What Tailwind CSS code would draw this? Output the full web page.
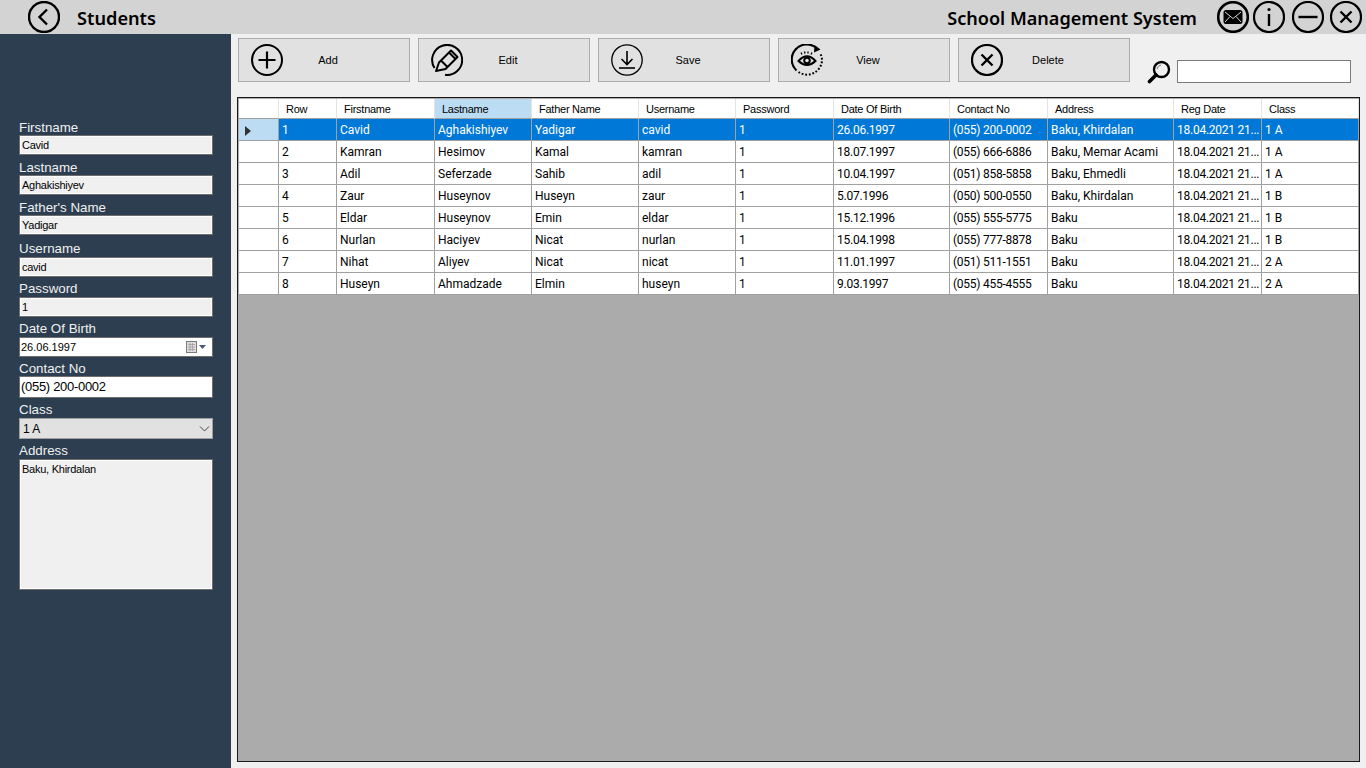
<!DOCTYPE html>
<html>
<head>
<meta charset="UTF-8">
<title>Students</title>
<script src="https://cdn.jsdelivr.net/npm/@tailwindcss/browser@4"></script>
</head>
<body class="w-[1366px] h-[768px] overflow-hidden bg-[#f0f0f0] font-['Liberation_Sans',sans-serif]">

<!-- Title bar -->
<div class="h-[34px] bg-[#d3d3d3] flex items-center pl-[28px] pr-[4px] text-black">
  <svg class="w-[32px] h-[32px]" viewBox="0 0 32 32" fill="none" stroke="black" stroke-width="2.4"><circle cx="16" cy="16" r="15"/><path d="M19 8.5 L11.5 16 L19 23.5" stroke-width="2.4"/></svg>
  <div class="ml-[17px] pt-[3px] text-[18.2px] font-semibold font-['Noto_Sans',sans-serif]">Students</div>
  <div class="ml-auto pt-[3px] text-[18.1px] font-semibold font-['Noto_Sans',sans-serif]">School Management System</div>
  <div class="ml-[20px] flex">
    <svg class="w-[32px] h-[32px]" viewBox="0 0 32 32" fill="none" stroke="black" stroke-width="2.6"><circle cx="16" cy="16" r="14.8"/><rect x="6.5" y="9" width="19" height="14" rx="2.5" fill="black" stroke="none"/><path d="M8 11 L16 17.5 L24 11 M8 21 L13 15.5 M24 21 L19 15.5" stroke="#d3d3d3" stroke-width="1"/></svg>
    <svg class="ml-[4px] w-[32px] h-[32px]" viewBox="0 0 32 32" fill="none" stroke="black" stroke-width="2.2"><circle cx="16" cy="16" r="15"/><path d="M16 13 V25" stroke-width="2.4"/><circle cx="16" cy="8.5" r="1.6" fill="black" stroke="none"/></svg>
    <svg class="ml-[7px] w-[32px] h-[32px]" viewBox="0 0 32 32" fill="none" stroke="black" stroke-width="2.2"><circle cx="16" cy="16" r="15"/><path d="M6.5 16 H25.5" stroke-width="2.4"/></svg>
    <svg class="ml-[6px] w-[32px] h-[32px]" viewBox="0 0 32 32" fill="none" stroke="black" stroke-width="2.2"><circle cx="16" cy="16" r="15"/><path d="M10.5 10.5 L21.5 21.5 M21.5 10.5 L10.5 21.5" stroke-width="2.4"/></svg>
  </div>
</div>

<div class="flex h-[734px]">
  <!-- Left panel -->
  <div class="w-[231px] bg-[#2c3e50] pl-[19px] pt-[86px] text-[13.33px] text-[#f0f0f0] leading-[15px]">
    <div>Firstname</div>
    <div class="w-[194px] h-[20px] bg-[#f0f0f0] border border-[#6e6e6e] shadow-[inset_0_0_0_1px_white] text-[11px] tracking-[-0.25px] text-black pl-[2px] leading-[18px]">Cavid</div>
    <div class="mt-[5px]">Lastname</div>
    <div class="w-[194px] h-[20px] bg-[#f0f0f0] border border-[#6e6e6e] shadow-[inset_0_0_0_1px_white] text-[11px] tracking-[-0.25px] text-black pl-[2px] leading-[18px]">Aghakishiyev</div>
    <div class="mt-[5px]">Father's Name</div>
    <div class="w-[194px] h-[20px] bg-[#f0f0f0] border border-[#6e6e6e] shadow-[inset_0_0_0_1px_white] text-[11px] tracking-[-0.25px] text-black pl-[2px] leading-[18px]">Yadigar</div>
    <div class="mt-[6px]">Username</div>
    <div class="mt-[1px] w-[194px] h-[20px] bg-[#f0f0f0] border border-[#6e6e6e] shadow-[inset_0_0_0_1px_white] text-[11px] tracking-[-0.25px] text-black pl-[2px] leading-[18px]">cavid</div>
    <div class="mt-[4px]">Password</div>
    <div class="mt-[1px] w-[194px] h-[20px] bg-[#f0f0f0] border border-[#6e6e6e] shadow-[inset_0_0_0_1px_white] text-[11px] tracking-[-0.25px] text-black pl-[2px] leading-[18px]">1</div>
    <div class="mt-[4px]">Date Of Birth</div>
    <div class="mt-[1px] w-[194px] h-[20px] bg-white border border-[#6e6e6e] text-[11px] text-black pl-[1px] leading-[18px] flex items-center">
      <span>26.06.1997</span>
      <svg class="ml-auto mr-[5px] w-[21px] h-[12px]" viewBox="0 0 21 12"><rect x="0.5" y="0.5" width="10" height="11" fill="#dcdcdc" stroke="#7a7a7a"/><path d="M2 3.5 H9 M2 6 H9 M2 8.5 H9 M4 2 V10 M6.5 2 V10" stroke="#a0a0a0" stroke-width="0.8"/><path d="M13 4 H20 L16.5 8 Z" fill="#4a5a78"/></svg>
    </div>
    <div class="mt-[4px]">Contact No</div>
    <div class="w-[194px] h-[22px] bg-white border border-[#6e6e6e] text-[13px] tracking-[-0.3px] text-black pl-[1px] leading-[20px]">(055) 200-0002</div>
    <div class="mt-[4px]">Class</div>
    <div class="mt-[1px] w-[194px] h-[21px] bg-[#e1e1e1] border border-[#a0a0a0] text-[12px] text-black pl-[3px] pt-[1px] leading-[19px] flex items-center">
      <span>1 A</span>
      <svg class="ml-auto mr-[2px] w-[11px] h-[6px]" viewBox="0 0 11 6" fill="none" stroke="#444" stroke-width="1"><path d="M1 0.5 L5.5 5 L10 0.5"/></svg>
    </div>
    <div class="mt-[4px]">Address</div>
    <div class="mt-[1px] w-[194px] h-[131px] bg-[#f0f0f0] border border-[#6e6e6e] shadow-[inset_0_0_0_1px_white] text-[11px] tracking-[-0.25px] text-black pl-[2px] pt-[1px] leading-[16px]">Baku, Khirdalan</div>
  </div>

  <!-- Right side -->
  <div class="flex-1 pl-[6px]">
    <div class="flex items-start pt-[4px] pl-[1px] text-[11px] text-black">
      <div class="w-[172px] h-[44px] bg-[#e1e1e1] border border-[#adadad] flex items-center pl-[12px]">
        <svg class="w-[32px] h-[32px]" viewBox="0 0 32 32" fill="none" stroke="black" stroke-width="2"><circle cx="16" cy="16" r="15"/><path d="M16 7.5 V24.5 M7.5 16 H24.5" stroke-width="2.2"/></svg>
        <span class="w-[90px] text-center">Add</span>
      </div>
      <div class="ml-[8px] w-[172px] h-[44px] bg-[#e1e1e1] border border-[#adadad] flex items-center pl-[12px]">
        <svg class="w-[32px] h-[32px]" viewBox="0 0 32 32" fill="none" stroke="black" stroke-width="2"><path d="M3.5 24 A15 15 0 1 1 14 30.8"/><path d="M5 27 L8 18.5 L20 6.5 L26.5 13 L14.5 25 Z M10 16.5 L16.5 23 M18 8.5 L24.5 15" stroke-width="2" stroke-linejoin="round"/></svg>
        <span class="w-[90px] text-center">Edit</span>
      </div>
      <div class="ml-[8px] w-[172px] h-[44px] bg-[#e1e1e1] border border-[#adadad] flex items-center pl-[12px]">
        <svg class="w-[32px] h-[32px]" viewBox="0 0 32 32" fill="none" stroke="black" stroke-width="1.3"><circle cx="16" cy="16" r="15.2"/><path d="M16 7 V20.5 M10.5 15 L16 20.5 L21.5 15" stroke-width="1.6"/><path d="M8 24 H24" stroke-width="1.6"/></svg>
        <span class="w-[90px] text-center">Save</span>
      </div>
      <div class="ml-[8px] w-[172px] h-[44px] bg-[#e1e1e1] border border-[#adadad] flex items-center pl-[12px]">
        <svg class="w-[32px] h-[32px]" viewBox="0 0 32 32" fill="none" stroke="black" stroke-width="2"><path d="M26 4.5 A15 15 0 0 0 5.5 26.5" stroke-width="2.2"/><path d="M7.5 28 A15 15 0 0 0 31 16 A15 15 0 0 0 29 9" stroke-dasharray="1.8 1.8" stroke-width="2"/><path d="M23.5 1 L29.5 5.5 L23 8.5 Z" fill="black" stroke="none"/><path d="M7.5 17 Q16 7.5 24.5 17 Q16 25 7.5 17 Z" stroke-width="2"/><circle cx="16" cy="16.5" r="2.8" stroke-width="2"/><path d="M11 10.5 L10 8.5 M14 9.5 L13.5 7.5 M17 9.5 V7.5 M20 10.5 L21 8.5" stroke-width="1.3"/></svg>
        <span class="w-[90px] text-center">View</span>
      </div>
      <div class="ml-[8px] w-[172px] h-[44px] bg-[#e1e1e1] border border-[#adadad] flex items-center pl-[12px]">
        <svg class="w-[32px] h-[32px]" viewBox="0 0 32 32" fill="none" stroke="black" stroke-width="2.2"><circle cx="16" cy="16" r="15"/><path d="M10.5 10.5 L21.5 21.5 M21.5 10.5 L10.5 21.5" stroke-width="2.4"/></svg>
        <span class="w-[90px] text-center">Delete</span>
      </div>
      <svg class="ml-[17px] mt-[22px] w-[24px] h-[24px]" viewBox="0 0 24 24" fill="none" stroke="black"><circle cx="14.5" cy="9.5" r="7.5" stroke-width="2.4"/><path d="M2.5 21.5 L9 15" stroke-width="3.6" stroke-linecap="round"/><path d="M10 9 A5 5 0 0 1 14 5" stroke-width="1" stroke="#777"/></svg>
      <div class="ml-[6px] mt-[22px] w-[174px] h-[23px] bg-white border border-[#7a7a7a]"></div>
    </div>

    <!-- Grid -->
    <div class="mt-[13px] w-[1123px] h-[665px] bg-[#ababab] border border-[#1a1a1a] pt-[1px] pl-[1px] font-['Roboto',sans-serif]">
      <table class="table-fixed border-separate border-spacing-0 text-[12px] leading-[19px] text-black w-[1120px]">
        <colgroup>
          <col class="w-[40px]"><col class="w-[58px]"><col class="w-[98px]"><col class="w-[97px]"><col class="w-[107px]"><col class="w-[97px]"><col class="w-[98px]"><col class="w-[116px]"><col class="w-[98px]"><col class="w-[126px]"><col class="w-[88px]"><col class="w-[97px]">
        </colgroup>
        <thead class="bg-white font-['Liberation_Sans',sans-serif] text-[11px] tracking-[-0.25px]">
          <tr class="h-[20px] *:font-normal *:text-left *:pl-[7px] *:pt-[1px] *:border-r *:border-b *:border-r-[#e4e4e4] *:border-b-[#a0a0a0] *:leading-[18px] *:overflow-hidden">
            <th class="border-r-[#a0a0a0]"></th><th>Row</th><th>Firstname</th><th class="bg-[#bcdcf4]">Lastname</th><th>Father Name</th><th>Username</th><th>Password</th><th>Date Of Birth</th><th>Contact No</th><th>Address</th><th>Reg Date</th><th>Class</th>
          </tr>
        </thead>
        <tbody>
          <tr class="h-[22px] bg-[#0078d7] text-white *:pl-[3px] *:pt-[2px] *:border-r *:border-b *:border-[#a0a0a0] *:whitespace-nowrap *:overflow-hidden">
            <td class="bg-[#bcdcf4] border-b-[#e4e4e4]"><svg class="ml-[3px] w-[6px] h-[10px]" viewBox="0 0 6 10"><path d="M0 0 L6 5 L0 10 Z" fill="#333"/></svg></td><td>1</td><td>Cavid</td><td>Aghakishiyev</td><td>Yadigar</td><td>cavid</td><td>1</td><td class="tracking-[-0.25px]">26.06.1997</td><td class="tracking-[-0.25px]">(055) 200-0002</td><td>Baku, Khirdalan</td><td class="tracking-[-0.25px]">18.04.2021 21...</td><td>1 A</td>
          </tr>
          <tr class="h-[22px] bg-white *:pl-[3px] *:pt-[2px] *:border-r *:border-b *:border-[#a0a0a0] *:whitespace-nowrap *:overflow-hidden">
            <td class="border-b-[#e4e4e4]"></td><td>2</td><td>Kamran</td><td>Hesimov</td><td>Kamal</td><td>kamran</td><td>1</td><td class="tracking-[-0.25px]">18.07.1997</td><td class="tracking-[-0.25px]">(055) 666-6886</td><td>Baku, Memar Acami</td><td class="tracking-[-0.25px]">18.04.2021 21...</td><td>1 A</td>
          </tr>
          <tr class="h-[22px] bg-white *:pl-[3px] *:pt-[2px] *:border-r *:border-b *:border-[#a0a0a0] *:whitespace-nowrap *:overflow-hidden">
            <td class="border-b-[#e4e4e4]"></td><td>3</td><td>Adil</td><td>Seferzade</td><td>Sahib</td><td>adil</td><td>1</td><td class="tracking-[-0.25px]">10.04.1997</td><td class="tracking-[-0.25px]">(051) 858-5858</td><td>Baku, Ehmedli</td><td class="tracking-[-0.25px]">18.04.2021 21...</td><td>1 A</td>
          </tr>
          <tr class="h-[22px] bg-white *:pl-[3px] *:pt-[2px] *:border-r *:border-b *:border-[#a0a0a0] *:whitespace-nowrap *:overflow-hidden">
            <td class="border-b-[#e4e4e4]"></td><td>4</td><td>Zaur</td><td>Huseynov</td><td>Huseyn</td><td>zaur</td><td>1</td><td class="tracking-[-0.25px]">5.07.1996</td><td class="tracking-[-0.25px]">(050) 500-0550</td><td>Baku, Khirdalan</td><td class="tracking-[-0.25px]">18.04.2021 21...</td><td>1 B</td>
          </tr>
          <tr class="h-[22px] bg-white *:pl-[3px] *:pt-[2px] *:border-r *:border-b *:border-[#a0a0a0] *:whitespace-nowrap *:overflow-hidden">
            <td class="border-b-[#e4e4e4]"></td><td>5</td><td>Eldar</td><td>Huseynov</td><td>Emin</td><td>eldar</td><td>1</td><td class="tracking-[-0.25px]">15.12.1996</td><td class="tracking-[-0.25px]">(055) 555-5775</td><td>Baku</td><td class="tracking-[-0.25px]">18.04.2021 21...</td><td>1 B</td>
          </tr>
          <tr class="h-[22px] bg-white *:pl-[3px] *:pt-[2px] *:border-r *:border-b *:border-[#a0a0a0] *:whitespace-nowrap *:overflow-hidden">
            <td class="border-b-[#e4e4e4]"></td><td>6</td><td>Nurlan</td><td>Haciyev</td><td>Nicat</td><td>nurlan</td><td>1</td><td class="tracking-[-0.25px]">15.04.1998</td><td class="tracking-[-0.25px]">(055) 777-8878</td><td>Baku</td><td class="tracking-[-0.25px]">18.04.2021 21...</td><td>1 B</td>
          </tr>
          <tr class="h-[22px] bg-white *:pl-[3px] *:pt-[2px] *:border-r *:border-b *:border-[#a0a0a0] *:whitespace-nowrap *:overflow-hidden">
            <td class="border-b-[#e4e4e4]"></td><td>7</td><td>Nihat</td><td>Aliyev</td><td>Nicat</td><td>nicat</td><td>1</td><td class="tracking-[-0.25px]">11.01.1997</td><td class="tracking-[-0.25px]">(051) 511-1551</td><td>Baku</td><td class="tracking-[-0.25px]">18.04.2021 21...</td><td>2 A</td>
          </tr>
          <tr class="h-[22px] bg-white *:pl-[3px] *:pt-[2px] *:border-r *:border-b *:border-[#a0a0a0] *:whitespace-nowrap *:overflow-hidden">
            <td class="border-b-[#e4e4e4]"></td><td>8</td><td>Huseyn</td><td>Ahmadzade</td><td>Elmin</td><td>huseyn</td><td>1</td><td class="tracking-[-0.25px]">9.03.1997</td><td class="tracking-[-0.25px]">(055) 455-4555</td><td>Baku</td><td class="tracking-[-0.25px]">18.04.2021 21...</td><td>2 A</td>
          </tr>
        </tbody>
      </table>
    </div>
  </div>
</div>
</body>
</html>
